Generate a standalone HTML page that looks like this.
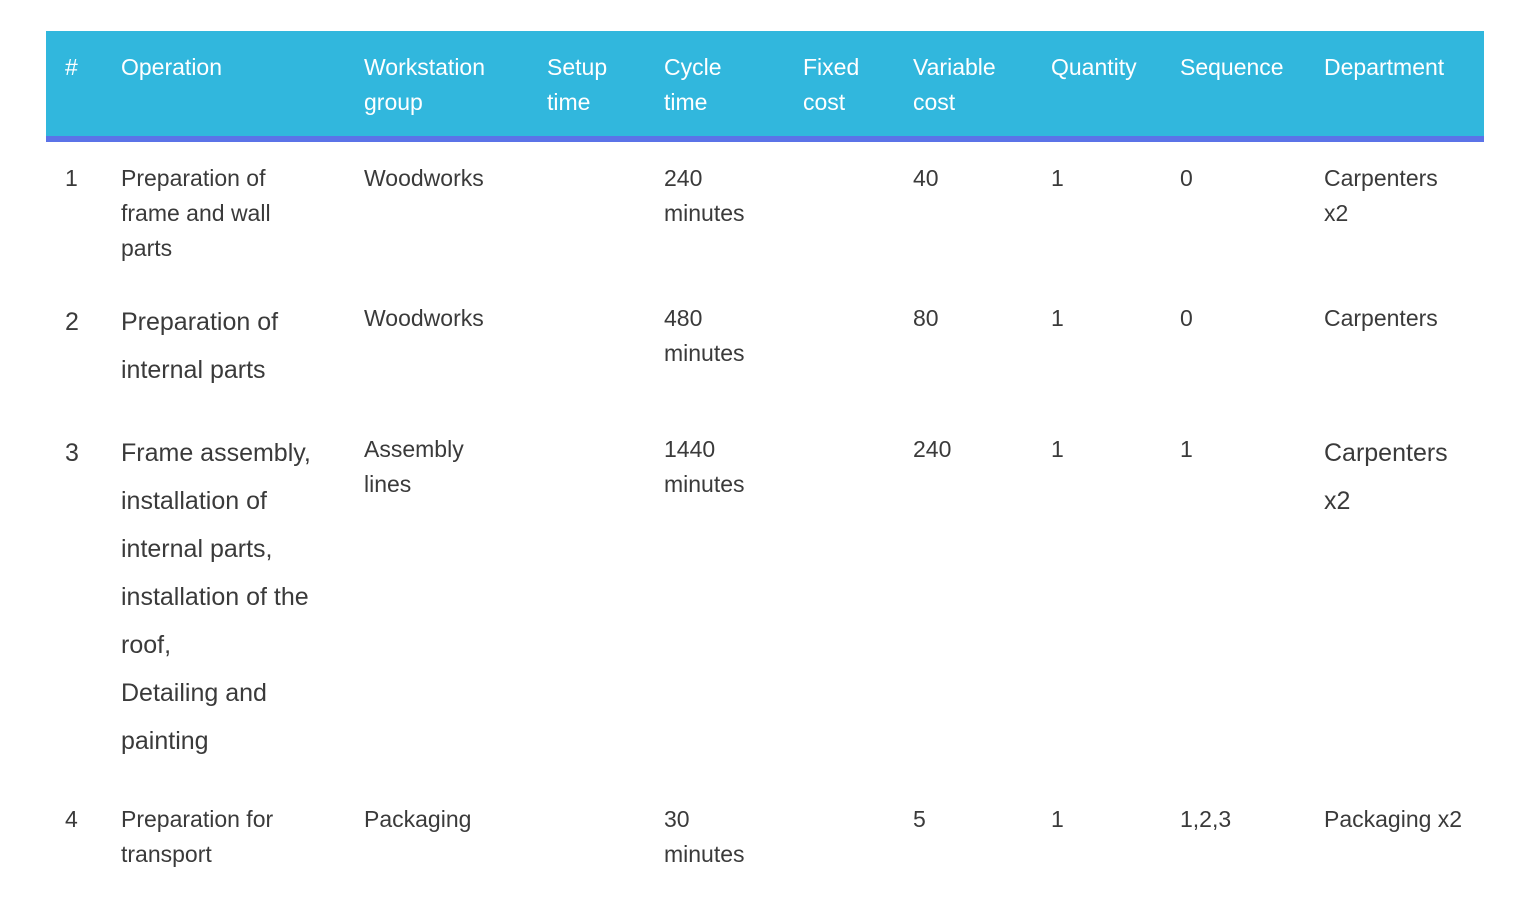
<!DOCTYPE html>
<html><head><meta charset="utf-8"><style>
body{margin:0;width:1536px;height:902px;background:#fff;position:relative;overflow:hidden;font-family:"Liberation Sans",sans-serif;}
.hd{position:absolute;left:46px;top:31px;width:1438px;height:105px;background:#31b7dd;}
.bar{position:absolute;left:46px;top:136px;width:1438px;height:6px;background:#5b73e8;}
.t{position:absolute;font-size:23px;line-height:35px;color:#3a3a3a;white-space:nowrap;}
.h{color:#fff;}
.b{font-size:25px;line-height:48px;}
</style></head><body>
<div class="hd"></div><div class="bar"></div>
<div class="t h" style="left:65px;top:50px">#</div>
<div class="t h" style="left:121px;top:50px">Operation</div>
<div class="t h" style="left:364px;top:50px">Workstation<br>group</div>
<div class="t h" style="left:547px;top:50px">Setup<br>time</div>
<div class="t h" style="left:664px;top:50px">Cycle<br>time</div>
<div class="t h" style="left:803px;top:50px">Fixed<br>cost</div>
<div class="t h" style="left:913px;top:50px">Variable<br>cost</div>
<div class="t h" style="left:1051px;top:50px">Quantity</div>
<div class="t h" style="left:1180px;top:50px">Sequence</div>
<div class="t h" style="left:1324px;top:50px">Department</div>

<div class="t" style="left:65px;top:161px">1</div>
<div class="t" style="left:121px;top:161px">Preparation of<br>frame and wall<br>parts</div>
<div class="t" style="left:364px;top:161px">Woodworks</div>
<div class="t" style="left:664px;top:161px">240<br>minutes</div>
<div class="t" style="left:913px;top:161px">40</div>
<div class="t" style="left:1051px;top:161px">1</div>
<div class="t" style="left:1180px;top:161px">0</div>
<div class="t" style="left:1324px;top:161px">Carpenters<br>x2</div>

<div class="t b" style="left:65px;top:298px">2</div>
<div class="t b" style="left:121px;top:298px">Preparation of<br>internal parts</div>
<div class="t" style="left:364px;top:301px">Woodworks</div>
<div class="t" style="left:664px;top:301px">480<br>minutes</div>
<div class="t" style="left:913px;top:301px">80</div>
<div class="t" style="left:1051px;top:301px">1</div>
<div class="t" style="left:1180px;top:301px">0</div>
<div class="t" style="left:1324px;top:301px">Carpenters</div>

<div class="t b" style="left:65px;top:429px">3</div>
<div class="t b" style="left:121px;top:429px">Frame assembly,<br>installation of<br>internal parts,<br>installation of the<br>roof,<br>Detailing and<br>painting</div>
<div class="t" style="left:364px;top:432px">Assembly<br>lines</div>
<div class="t" style="left:664px;top:432px">1440<br>minutes</div>
<div class="t" style="left:913px;top:432px">240</div>
<div class="t" style="left:1051px;top:432px">1</div>
<div class="t" style="left:1180px;top:432px">1</div>
<div class="t b" style="left:1324px;top:429px">Carpenters<br>x2</div>

<div class="t" style="left:65px;top:802px">4</div>
<div class="t" style="left:121px;top:802px">Preparation for<br>transport</div>
<div class="t" style="left:364px;top:802px">Packaging</div>
<div class="t" style="left:664px;top:802px">30<br>minutes</div>
<div class="t" style="left:913px;top:802px">5</div>
<div class="t" style="left:1051px;top:802px">1</div>
<div class="t" style="left:1180px;top:802px">1,2,3</div>
<div class="t" style="left:1324px;top:802px">Packaging x2</div>
</body></html>
